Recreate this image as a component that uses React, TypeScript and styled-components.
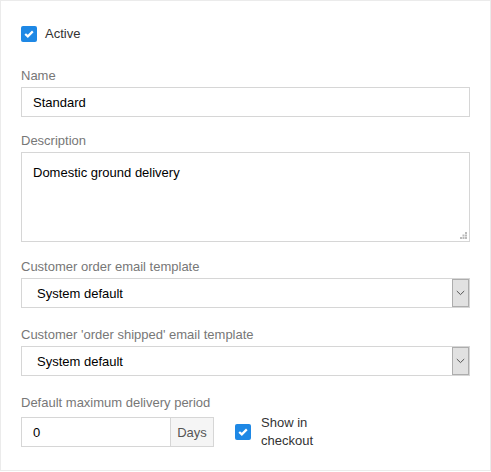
import React from "react";
import styled, { createGlobalStyle } from "styled-components";

const GlobalStyle = createGlobalStyle`
  html, body {
    margin: 0;
    padding: 0;
    background: #ffffff;
  }
  body {
    font-family: "Liberation Sans", Arial, sans-serif;
    font-size: 13px;
    color: #333;
  }
`;

const Panel = styled.div`
  box-sizing: border-box;
  width: 491px;
  height: 471px;
  border: 1px solid #ebebeb;
  background: #fff;
  padding: 24px 20px 0 20px;
  display: flex;
  flex-direction: column;
`;

const CheckRow = styled.label<{ $gap?: number }>`
  display: flex;
  align-items: center;
  gap: ${(p) => p.$gap ?? 8}px;
  line-height: 18px;
  color: #333;
  font-size: 13px;
  margin-bottom: 24px;
  cursor: pointer;
`;

const Box = styled.span`
  flex: none;
  width: 16px;
  height: 16px;
  border-radius: 2px;
  background: #1e88e5;
  display: flex;
  align-items: center;
  justify-content: center;
`;

const Fields = styled.div`
  display: flex;
  flex-direction: column;
  gap: 16px;
`;

const Field = styled.div<{ $offset?: number }>`
  display: flex;
  flex-direction: column;
  margin-top: ${(p) => p.$offset ?? 0}px;
`;

const Label = styled.span`
  display: block;
  line-height: 18px;
  margin-bottom: 2px;
  color: #777;
  font-size: 13px;
`;

const TextInput = styled.input<{ $width?: number }>`
  box-sizing: border-box;
  height: 30px;
  width: ${(p) => (p.$width ? `${p.$width}px` : "100%")};
  border: 1px solid #d6d6d6;
  padding: 0 11px;
  font-family: inherit;
  font-size: 13px;
  color: #000;
  background: #fff;
  outline: none;
`;

const AreaWrap = styled.div`
  position: relative;
`;

const TextArea = styled.textarea`
  box-sizing: border-box;
  display: block;
  width: 100%;
  height: 90px;
  border: 1px solid #d6d6d6;
  padding: 12px 11px;
  font-family: inherit;
  font-size: 13px;
  line-height: 16px;
  color: #000;
  resize: none;
  outline: none;
`;

const Grip = styled.svg`
  position: absolute;
  right: 3px;
  bottom: 3px;
`;

const Select = styled.div`
  box-sizing: border-box;
  height: 30px;
  border: 1px solid #d6d6d6;
  display: flex;
  align-items: stretch;
  background: #fff;
`;

const SelectValue = styled.span`
  flex: 1;
  display: flex;
  align-items: center;
  padding-left: 15px;
  color: #000;
  font-size: 13px;
`;

const Arrow = styled.span`
  box-sizing: border-box;
  width: 17px;
  background: #e1e1e1;
  border: 1px solid #adadad;
  display: flex;
  align-items: center;
  justify-content: center;
`;

const PeriodRow = styled.div`
  display: flex;
  align-items: center;
`;

const InputGroup = styled.div`
  display: flex;
`;

const Addon = styled.span`
  box-sizing: border-box;
  height: 30px;
  width: 43px;
  border: 1px solid #d6d6d6;
  border-left: none;
  background: #f5f5f5;
  color: #555;
  display: flex;
  align-items: center;
  justify-content: center;
  font-size: 13px;
`;

const InlineCheck = styled(CheckRow)`
  margin: 0 0 0 21px;
`;

const Wrap = styled.span`
  width: 60px;
  line-height: 18px;
`;

const Check = () => (
  <Box>
    <svg width="10" height="8" viewBox="0 0 10 8">
      <path d="M1.2 4 L3.8 6.4 L8.8 1.4" fill="none" stroke="#fff" strokeWidth="2.2" />
    </svg>
  </Box>
);

const Dropdown = ({ value }: { value: string }) => (
  <Select>
    <SelectValue>{value}</SelectValue>
    <Arrow>
      <svg width="9" height="6" viewBox="0 0 9 6">
        <path d="M0.8 1 L4.5 4.6 L8.2 1" fill="none" stroke="#555" strokeWidth="1" />
      </svg>
    </Arrow>
  </Select>
);

export default function App() {
  return (
    <>
      <GlobalStyle />
      <Panel>
        <CheckRow>
          <Check />
          Active
        </CheckRow>
        <Fields>
          <Field>
            <Label>Name</Label>
            <TextInput defaultValue="Standard" />
          </Field>
          <Field $offset={-1}>
            <Label>Description</Label>
            <AreaWrap>
              <TextArea defaultValue="Domestic ground delivery" />
              <Grip width="7" height="7" viewBox="0 0 7 7">
                <rect x="5" y="0" width="2" height="2" fill="#bbb" />
                <rect x="2.5" y="2.5" width="2" height="2" fill="#bbb" />
                <rect x="5" y="2.5" width="2" height="2" fill="#bbb" />
                <rect x="0" y="5" width="2" height="2" fill="#bbb" />
                <rect x="2.5" y="5" width="2" height="2" fill="#bbb" />
                <rect x="5" y="5" width="2" height="2" fill="#bbb" />
              </Grip>
            </AreaWrap>
          </Field>
          <Field>
            <Label>Customer order email template</Label>
            <Dropdown value="System default" />
          </Field>
          <Field $offset={2}>
            <Label>Customer 'order shipped' email template</Label>
            <Dropdown value="System default" />
          </Field>
          <Field $offset={2}>
            <Label>Default maximum delivery period</Label>
            <PeriodRow>
              <InputGroup>
                <TextInput $width={150} defaultValue="0" />
                <Addon>Days</Addon>
              </InputGroup>
              <InlineCheck $gap={10}>
                <Check />
                <Wrap>Show in checkout</Wrap>
              </InlineCheck>
            </PeriodRow>
          </Field>
        </Fields>
      </Panel>
    </>
  );
}
